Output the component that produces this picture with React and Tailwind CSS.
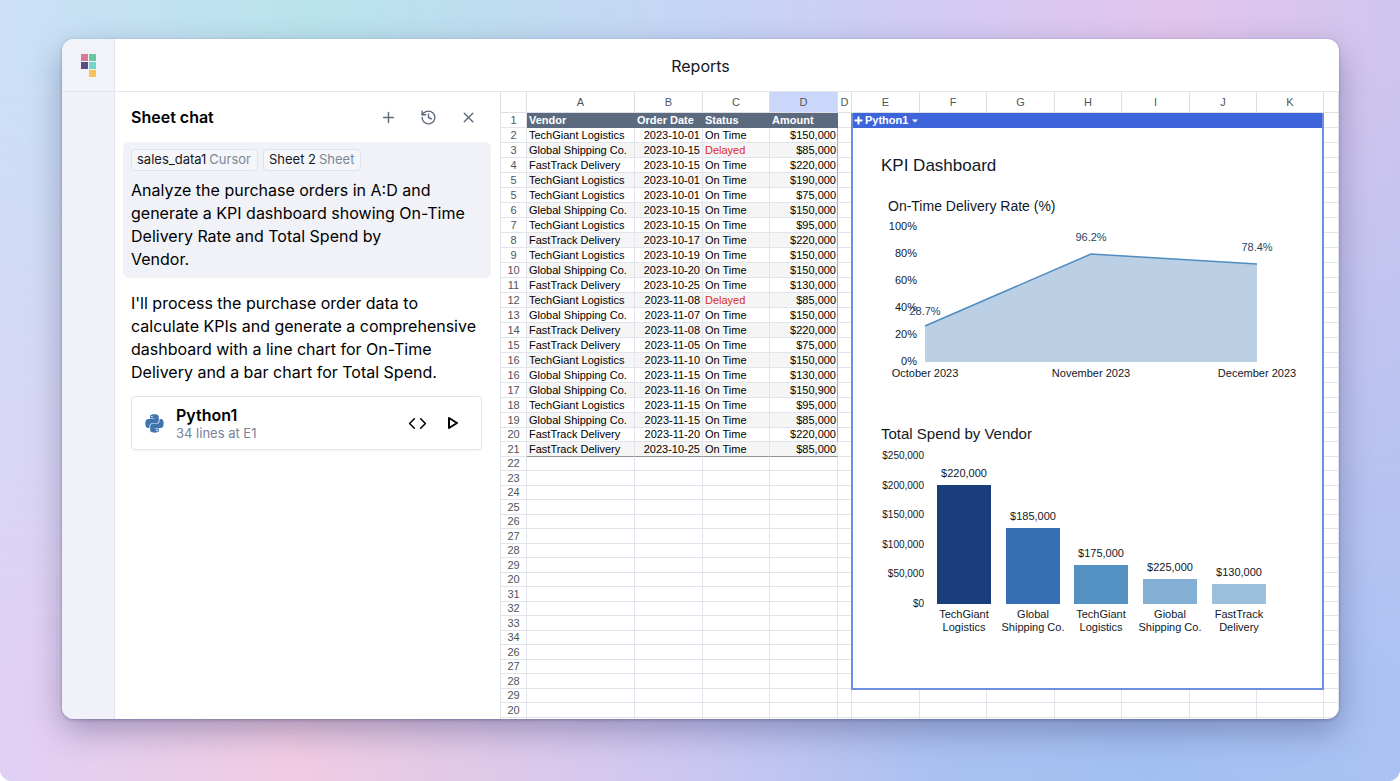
import React from 'react';
import { Plus, X, History, Code } from 'lucide-react';
import { FaPython } from 'react-icons/fa';
import clsx from 'clsx';

const TECH = 'TechGiant Logistics';
const GLOBAL = 'Global Shipping Co.';
const FAST = 'FastTrack Delivery';

const orders = [
    [TECH, '2023-10-01', 'On Time', '$150,000'],
    [GLOBAL, '2023-10-15', 'Delayed', '$85,000'],
    [FAST, '2023-10-15', 'On Time', '$220,000'],
    [TECH, '2023-10-01', 'On Time', '$190,000'],
    [TECH, '2023-10-01', 'On Time', '$75,000'],
    ['Glebal Shipping Co.', '2023-10-15', 'On Time', '$150,000'],
    [TECH, '2023-10-15', 'On Time', '$95,000'],
    [FAST, '2023-10-17', 'On Time', '$220,000'],
    [TECH, '2023-10-19', 'On Time', '$150,000'],
    [GLOBAL, '2023-10-20', 'On Time', '$150,000'],
    [FAST, '2023-10-25', 'On Time', '$130,000'],
    [TECH, '2023-11-08', 'Delayed', '$85,000'],
    [GLOBAL, '2023-11-07', 'On Time', '$150,000'],
    [FAST, '2023-11-08', 'On Time', '$220,000'],
    [FAST, '2023-11-05', 'On Time', '$75,000'],
    [TECH, '2023-11-10', 'On Time', '$150,000'],
    [GLOBAL, '2023-11-15', 'On Time', '$130,000'],
    [GLOBAL, '2023-11-16', 'On Time', '$150,900'],
    [TECH, '2023-11-15', 'On Time', '$95,000'],
    [GLOBAL, '2023-11-15', 'On Time', '$85,000'],
    [FAST, '2023-11-20', 'On Time', '$220,000'],
    [FAST, '2023-10-25', 'On Time', '$85,000'],
];

const rowLabels = [
    1, 2, 3, 4, 5, 5, 6, 7, 8, 9, 10, 11, 12, 13, 14, 15, 16, 16, 17, 18, 19, 20, 21,
    22, 23, 24, 25, 26, 27, 28, 29, 20, 31, 32, 33, 34, 26, 27, 28, 29, 20, 31,
];

const columns = [
    { name: 'A', width: 'w-[108px]' },
    { name: 'B', width: 'w-[68px]' },
    { name: 'C', width: 'w-[67px]' },
    { name: 'D', width: 'w-[68px]', selected: true },
    { name: 'D', width: 'w-[14px]' },
    { name: 'E', width: 'w-[68px]' },
    { name: 'F', width: 'w-[67px]' },
    { name: 'G', width: 'w-[68px]' },
    { name: 'H', width: 'w-[67px]' },
    { name: 'I', width: 'w-[68px]' },
    { name: 'J', width: 'w-[67px]' },
    { name: 'K', width: 'w-[67px]' },
    { name: '', width: '' },
];

const bars = [
    { value: '$220,000', height: 119, fill: '#1a3d7c', label: ['TechGiant', 'Logistics'] },
    { value: '$185,000', height: 76, fill: '#366fb3', label: ['Global', 'Shipping Co.'] },
    { value: '$175,000', height: 39, fill: '#5592c4', label: ['TechGiant', 'Logistics'] },
    { value: '$225,000', height: 25, fill: '#82afd3', label: ['Giobal', 'Shipping Co.'] },
    { value: '$130,000', height: 20, fill: '#9cbfdc', label: ['FastTrack', 'Delivery'] },
];

const Logo = () => (
    <svg width="15" height="23" viewBox="0 0 15 23" aria-label="Logo">
        <rect x="0" y="0" width="7" height="7" fill="#d9779a" />
        <rect x="8" y="0" width="7" height="7" fill="#6cc4a0" />
        <rect x="0" y="8" width="7" height="7" fill="#5b4a86" />
        <rect x="8" y="8" width="7" height="7" fill="#74d6cb" />
        <rect x="8" y="16" width="7" height="7" fill="#f7c15c" />
    </svg>
);

const PlayIcon = () => (
    <svg width="16" height="16" viewBox="0 0 16 16" fill="none" stroke="currentColor" strokeWidth="2" strokeLinejoin="round">
        <path d="M4 3 L12 8 L4 13 Z" />
    </svg>
);

const Tag = ({ name, kind }) => (
    <span className="h-[22px] pl-[5px] pr-[6px] flex items-center gap-[3px] rounded border border-[#dde3ec] bg-[#f4f6fa] text-[13px] text-[#15181e]">
        {name}
        <span className="text-[#7b8798]">{kind}</span>
    </span>
);

const ChatPanel = () => (
    <aside className="w-[385px] shrink-0 text-black">
        <div className="h-[50px] pl-4 pr-[23px] flex items-center justify-between">
            <h2 className="text-[16px] font-semibold">Sheet chat</h2>
            <div className="flex items-center gap-[23px] text-[#5f6b7d]">
                <button aria-label="New chat"><Plus size={17} strokeWidth={2} /></button>
                <button aria-label="History"><History size={17} strokeWidth={2} /></button>
                <button aria-label="Close"><X size={17} strokeWidth={2} /></button>
            </div>
        </div>
        <div className="ml-2 mr-[9px] px-2 pt-[7px] pb-[7px] rounded-md bg-[#f0f2f8]">
            <div className="flex gap-[5px] mb-2">
                <Tag name="sales_data1" kind="Cursor" />
                <Tag name="Sheet 2" kind="Sheet" />
            </div>
            <p className="text-[16px] leading-[23px]">
                Analyze the purchase orders in A:D and<br />
                generate a KPI dashboard showing On-Time<br />
                Delivery Rate and Total Spend by<br />
                Vendor.
            </p>
        </div>
        <p className="pl-4 mt-[14px] text-[16px] leading-[23px]">
            I'll process the purchase order data to<br />
            calculate KPIs and generate a comprehensive<br />
            dashboard with a line chart for On-Time<br />
            Delivery and a bar chart for Total Spend.
        </p>
        <div className="ml-4 mr-[18px] mt-3 h-[54px] pl-3 pr-5 flex items-center rounded border border-[#e0e5ec] shadow-xs">
            <FaPython size={21} className="text-[#3f75ae]" />
            <div className="ml-[11px] flex-1">
                <h3 className="text-[16px] leading-5 font-semibold">Python1</h3>
                <p className="text-[13px] leading-4 text-[#77839a]">34 lines at E1</p>
            </div>
            <div className="flex items-center gap-[18px]">
                <button aria-label="Show code"><Code size={19} strokeWidth={2} /></button>
                <button aria-label="Run"><PlayIcon /></button>
            </div>
        </div>
    </aside>
);

const LineChart = () => (
    <svg width="430" height="168" viewBox="0 0 430 168" fontSize="11" fill="#111827">
        <path d="M44 108 L210 36 L376 46 V144 H44 Z" fill="#bbd0e5" />
        <path d="M44 108 L210 36 L376 46" fill="none" stroke="#4f8cc0" strokeWidth="1.5" />
        {['100%', '80%', '60%', '40%', '20%', '0%'].map((tick, i) => (
            <text key={tick} x="36" y={12 + i * 27} textAnchor="end">{tick}</text>
        ))}
        <g textAnchor="middle" fill="#2b4363">
            <text x="44" y="97">28.7%</text>
            <text x="210" y="23">96.2%</text>
            <text x="376" y="33">78.4%</text>
        </g>
        <g textAnchor="middle">
            <text x="44" y="159">October 2023</text>
            <text x="210" y="159">November 2023</text>
            <text x="376" y="159">December 2023</text>
        </g>
    </svg>
);

const BarChart = () => (
    <svg width="430" height="192" viewBox="0 0 430 192" fontSize="11" fill="#111827">
        {['$250,000', '$200,000', '$150,000', '$100,000', '$50,000', '$0'].map((tick, i) => (
            <text key={tick} x="43" y={13 + Math.round(i * 29.6)} textAnchor="end" fontSize="10">{tick}</text>
        ))}
        {bars.map((bar, i) => {
            const x = 56 + Math.round(i * 68.7);
            return (
                <g key={i} textAnchor="middle">
                    <rect x={x} y={158 - bar.height} width="54" height={bar.height} fill={bar.fill} />
                    <text x={x + 27} y={150 - bar.height}>{bar.value}</text>
                    <text x={x + 27} y="172">{bar.label[0]}</text>
                    <text x={x + 27} y="185">{bar.label[1]}</text>
                </g>
            );
        })}
    </svg>
);

const PythonOutput = () => (
    <section className="absolute top-[21px] left-[351px] right-[15px] h-[577px] bg-white border-2 border-t-0 border-[#6e8fdd] text-[#111827]">
        <button className="w-full h-[15px] px-px flex items-center gap-[2px] bg-[#3d64da] text-white text-[11px] leading-none font-bold">
            <svg width="9" height="9" viewBox="0 0 9 9" fill="none" stroke="currentColor" strokeWidth="2">
                <path d="M4.5 0.5 V8.5 M0.5 4.5 H8.5" />
            </svg>
            Python1
            <svg className="ml-[2px]" width="6" height="4" viewBox="0 0 6 4" fill="currentColor">
                <path d="M0 0.5 H6 L3 3.5 Z" />
            </svg>
        </button>
        <div className="pl-7">
            <h2 className="mt-[26px] text-[17px] leading-6">KPI Dashboard</h2>
            <h3 className="ml-[7px] mt-[18px] mb-[2px] text-[14px] leading-5">On-Time Delivery Rate (%)</h3>
            <LineChart />
            <h3 className="mt-[38px] mb-[2px] text-[15px] leading-5">Total Spend by Vendor</h3>
            <BarChart />
        </div>
    </section>
);

const SheetRow = ({ label, index }) => {
    const order = orders[index - 1];
    const isHeader = index === 0;
    const last = index === orders.length;
    const height = index > 20 && index % 2 === 1 ? 'h-[14px]' : 'h-[15px]';
    const cell = clsx(
        'p-0 whitespace-nowrap border-b border-r leading-[13px]',
        last ? 'border-b-[#8e9299] border-r-[#e1e4ea]' : 'border-[#e1e4ea]',
        order && index % 2 === 0 && 'bg-[#f5f5f5]',
    );

    return (
        <tr className={height}>
            <th scope="row" className="p-0 font-normal text-center leading-[13px] text-[#50555c] border-b border-x border-[#e1e4ea]">{label}</th>
            {isHeader && ['Vendor', 'Order Date', 'Status', 'Amount'].map((name) => (
                <th key={name} scope="col" className="p-0 pl-[2px] text-left font-bold leading-[13px] whitespace-nowrap bg-[#5c6a80] text-white">{name}</th>
            ))}
            {order && (
                <>
                    <td className={clsx(cell, 'pl-[2px]')}>{order[0]}</td>
                    <td className={clsx(cell, 'pr-[2px] text-right')}>{order[1]}</td>
                    <td className={clsx(cell, 'pl-[2px]', order[2] === 'Delayed' && 'text-[#dc2a16]')}>{order[2]}</td>
                    <td className={clsx(cell, 'pr-px text-right border-r-[#a9adb4]')}>{order[3]}</td>
                </>
            )}
            {columns.slice(isHeader || order ? 4 : 0).map((col, i) => (
                <td key={i} className="p-0 border-b border-r border-[#e1e4ea]" />
            ))}
        </tr>
    );
};

const Sheet = () => (
    <main className="relative flex-1 min-w-0 overflow-hidden font-['Liberation_Sans',Arial,sans-serif] text-[11px] text-black">
        <table className="w-full table-fixed border-separate border-spacing-0">
            <thead>
                <tr className="h-[21px]">
                    <th className="w-[27px] p-0 border-b border-x border-[#dcdfe6]" />
                    {columns.map((col, i) => (
                        <th
                            key={i}
                            scope="col"
                            className={clsx('p-0 font-normal text-[11px] leading-[18px] text-[#50555c] border-b border-r border-[#dcdfe6]', col.width, col.selected && 'bg-[#cbd7fa]')}
                        >
                            {col.name}
                        </th>
                    ))}
                </tr>
            </thead>
            <tbody>
                {rowLabels.map((label, i) => <SheetRow key={i} label={label} index={i} />)}
            </tbody>
        </table>
        <PythonOutput />
    </main>
);

const App = () => (
    <div className="relative h-screen pl-[62px] pr-[61px] pt-[39px] pb-[62px] font-['Inter',sans-serif]">
        <div className="absolute inset-0 overflow-hidden rounded-b-xl bg-[linear-gradient(90deg,#cce0f7_0%,#b9e3ec_22%,#c6d5f5_51%,#d0ccf4_64%,#e3c5ed_84%,#cfc5ee_100%)]">
            <div className="size-full bg-[linear-gradient(90deg,#e0d0f5_0%,#f1cbe2_21%,#cbc7f1_50%,#aac1f1_66%,#a3bff2_82%,#abc2f3_100%)] [mask-image:linear-gradient(180deg,transparent_8%,black_88%)]" />
        </div>
        <div className="relative h-full flex flex-col overflow-hidden rounded-xl bg-white shadow-[0_12px_32px_rgba(60,60,110,0.4),0_1px_3px_rgba(60,60,110,0.4)]">
            <header className="h-[53px] shrink-0 flex border-b border-[#e2e5eb]">
                <div className="w-[53px] flex items-center justify-center bg-[#f1f3f8] border-r border-[#e2e5eb]">
                    <Logo />
                </div>
                <h1 className="flex-1 pr-[53px] pt-px flex items-center justify-center text-[16px] text-[#16181d]">Reports</h1>
            </header>
            <div className="flex-1 min-h-0 flex">
                <nav className="w-[53px] shrink-0 bg-[#f0f2f8] border-r border-[#e2e5eb]" />
                <ChatPanel />
                <Sheet />
            </div>
        </div>
    </div>
);

export default App;
